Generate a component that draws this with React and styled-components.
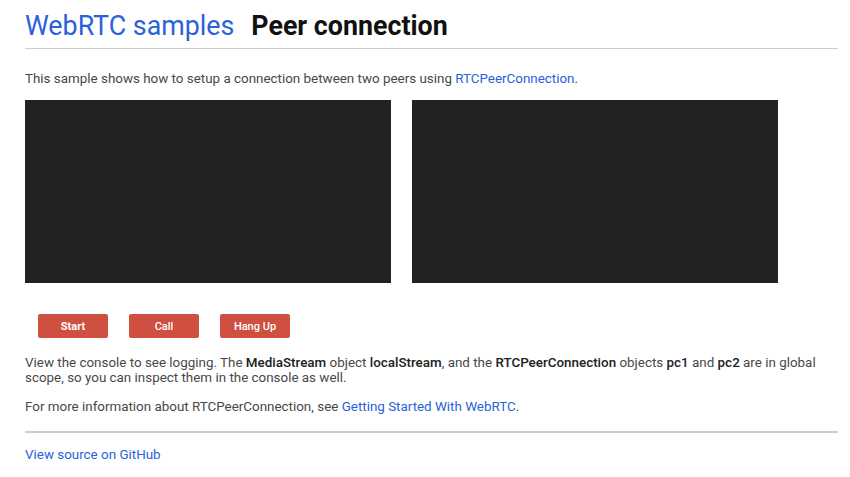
import React from 'react'
import styled, { createGlobalStyle } from 'styled-components'

const Global = createGlobalStyle`
  html, body {
    margin: 0;
    background: #fff;
  }
  body {
    font-family: Roboto, "Liberation Sans", sans-serif;
    color: #484848;
  }
`

const Page = styled.div`
  padding: 0 12px 0 25px;
`

const Header = styled.h1`
  margin: 0;
  padding: 11px 0 7px;
  font-size: 26.8px;
  font-weight: 400;
  line-height: 30px;
  border-bottom: 1px solid #ccc;
  display: flex;
  gap: 17px;
`

const Home = styled.a`
  color: #2962d9;
  text-decoration: none;
`

const Title = styled.span`
  color: #111;
  font-weight: 700;
`

const Text = styled.p`
  margin: ${(p) => p.$margin || '0'};
  font-size: 13.4px;
  line-height: 15px;
`

const Link = styled.a`
  color: #2962d9;
  text-decoration: none;
`

const Strong = styled.strong`
  color: #222;
  font-family: "Roboto Medium", Roboto, "Liberation Sans", sans-serif;
  font-weight: 500;
`

const Videos = styled.div`
  display: flex;
  gap: 21px;
  margin-top: 14px;
`

const Video = styled.div`
  width: 366px;
  height: 183px;
  background: #222;
`

const Buttons = styled.div`
  display: flex;
  gap: 21px;
  padding: 31px 0 17px 13px;
`

const Button = styled.button`
  width: 70px;
  height: 24px;
  border: none;
  border-radius: 2px;
  background: #cf5040;
  color: #fff;
  font-family: Roboto, "Liberation Sans", sans-serif;
  font-size: 11px;
  font-weight: ${(p) => (p.$bold ? 700 : 500)};
`

const Rule = styled.hr`
  margin: 17px 0 14px;
  border: 0;
  border-top: 2px solid #ccc;
`

export default function App() {
  return (
    <>
      <Global />
      <Page>
        <Header>
          <Home>WebRTC samples</Home>
          <Title>Peer connection</Title>
        </Header>
        <Text $margin="22px 0 0">
          This sample shows how to setup a connection between two peers using <Link>RTCPeerConnection</Link>.
        </Text>
        <Videos>
          <Video />
          <Video />
        </Videos>
        <Buttons>
          <Button $bold>Start</Button>
          <Button>Call</Button>
          <Button>Hang Up</Button>
        </Buttons>
        <Text>
          View the console to see logging. The <Strong>MediaStream</Strong> object <Strong>localStream</Strong>, and the{' '}
          <Strong>RTCPeerConnection</Strong> objects <Strong>pc1</Strong> and <Strong>pc2</Strong> are in global scope, so you can
          inspect them in the console as well.
        </Text>
        <Text $margin="14px 0 0">
          For more information about RTCPeerConnection, see <Link>Getting Started With WebRTC</Link>.
        </Text>
        <Rule />
        <Text>
          <Link>View source on GitHub</Link>
        </Text>
      </Page>
    </>
  )
}
